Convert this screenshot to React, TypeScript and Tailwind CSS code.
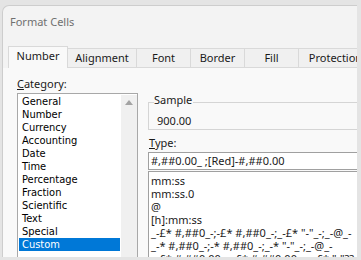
import React from "react";

const ui = "font-['Noto_Sans',sans-serif]";
const tah = "font-['DejaVu_Sans_Condensed','DejaVu_Sans',sans-serif]";

const cats = ["General","Number","Currency","Accounting","Date","Time","Percentage","Fraction","Scientific","Text","Special","Custom"];
const types = [
  "mm:ss",
  "mm:ss.0",
  "@",
  "[h]:mm:ss",
  '_-£* #,##0_-;-£* #,##0_-;_-£* "-"_-;_-@_-',
  '_-* #,##0_-;-* #,##0_-;_-* "-"_-;_-@_-',
  '_-£* #,##0.00_-;-£* #,##0.00_-;_-£* "-"??_-;_-@_-',
];

export default function App() {
  return (
    <div className="w-[361px] h-[260px] bg-[#e4e4e4] overflow-hidden flex flex-col pt-[5px] pl-[2px] pr-[4px] pb-[3px]">
      <div className="flex-1 flex flex-col rounded-tl-[7px] border-l border-t border-[#cdcdcd] bg-[#f3f3f3] overflow-hidden">
        <div className={`h-[33px] flex items-center pl-[7px] text-[11px] text-[#707070] ${ui}`}>Format Cells</div>
        <div className="h-[7px]" />
        <div className={`flex items-end h-[22px] pl-[5px] text-[11px] text-[#1a1a1a] ${ui}`}>
          <div className="w-[60px] shrink-0 h-[22px] bg-[#f9f9f9] border-l border-t border-r border-[#d9d9d9] flex items-center justify-center pb-[2px]">Number</div>
          {[["Alignment",69],["Font",54],["Border",54],["Fill",54],["Protection",74]].map(([t,w]) => (
            <div key={t as string} style={{ width: w as number }} className="shrink-0 h-[20px] bg-[#f0f0f0] border-t border-r border-b border-[#d9d9d9] flex items-center justify-center whitespace-nowrap">{t}</div>
          ))}
          <div className="flex-1 h-[20px] border-b border-[#d9d9d9]" />
        </div>
        <div className="flex-1 min-h-0 bg-[#f9f9f9] flex pl-[14px] pt-[9px]">
          <div className="w-[121px] shrink-0 flex flex-col">
            <div className={`text-[11px] leading-[13px] text-[#1a1a1a] ${ui}`}><span className="underline">C</span>ategory:</div>
            <div className="mt-[3px] flex-1 bg-white border border-[#a8a8a8] border-b-0 flex pt-[1px] pl-[1px] overflow-hidden">
              <div className={`flex-1 flex flex-col text-[11px] leading-[13px] text-black ${tah} pr-[1px]`}>
                {cats.map(c => (
                  <div key={c} className={`h-[13px] pl-[3px] ${c === "Custom" ? "bg-[#0078d7] text-white" : ""}`}>{c}</div>
                ))}
              </div>
              <div className="w-[16px] bg-[#f0f0f0] flex justify-center pt-[5px]">
                <svg width="8" height="5" viewBox="0 0 8 5"><path d="M0 5 L4 0 L8 5 Z" fill="#a3a3a3" /></svg>
              </div>
            </div>
          </div>
          <div className={`ml-[10px] flex-1 min-w-0 flex flex-col ${ui} text-[11px] text-[#1a1a1a]`}>
            <div className="relative mt-[25px] h-[28px] shrink-0 border border-[#d5d5d5] border-r-0">
              <div className="absolute left-[5px] top-[-10px] bg-[#f9f9f9] leading-[14px] pr-[1px]">Sample</div>
              <div className="pl-[8px] pt-[11px] leading-[14px]">900.00</div>
            </div>
            <div className="mt-[5px] leading-[15px] pl-[1px]"><span className="underline">T</span>ype:</div>
            <div className="mt-[2px] h-[18px] shrink-0 bg-white border border-[#a0a0a0] border-r-0 flex items-center pl-[2px] whitespace-nowrap overflow-hidden">#,##0.00_ ;[Red]-#,##0.00</div>
            <div className="flex-1 mt-[1px] bg-white border border-[#a0a0a0] border-r-0 border-b-0 pt-[2px] pl-[2px] overflow-hidden whitespace-nowrap">
              {types.map(t => (
                <div key={t} className="h-[13px] leading-[13px]">{t}</div>
              ))}
            </div>
          </div>
        </div>
      </div>
    </div>
  );
}
